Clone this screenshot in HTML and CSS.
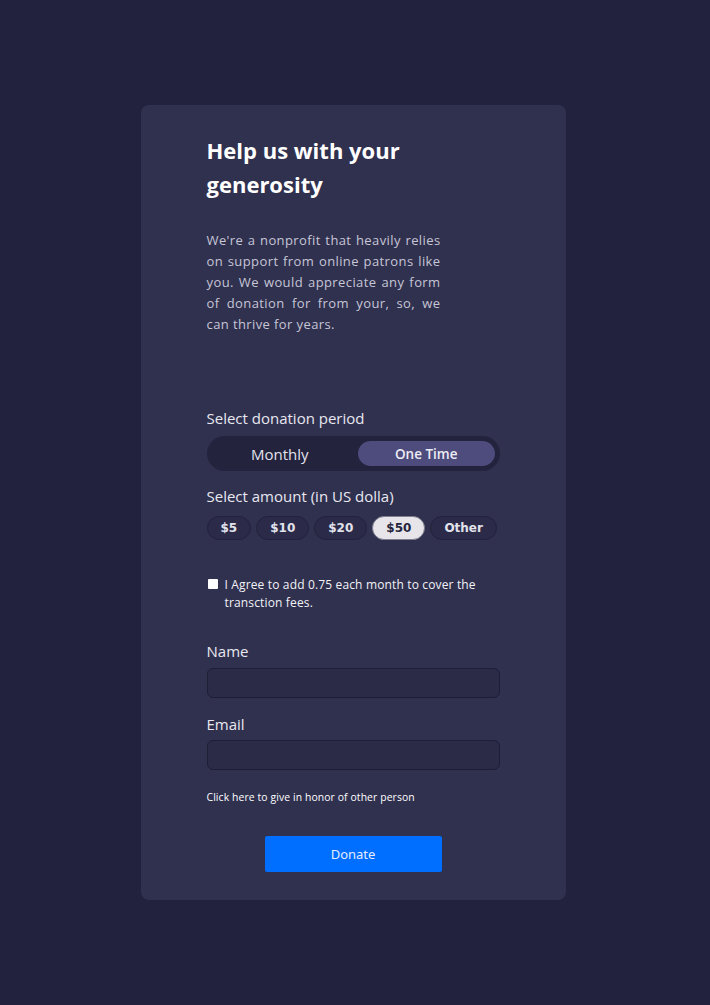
FILE: index.html
```html
<!DOCTYPE html>
<html lang="en">
<head>
<meta charset="utf-8">
<title>Donate</title>
<link rel="stylesheet" href="styles.css">
</head>
<body>
<div class="page">
  <form class="card">
    <h1 class="title">Help us with your generosity</h1>
    <p class="intro">We're a nonprofit that heavily relies on support from online patrons like you. We would appreciate any form of donation for from your, so, we can thrive for years.</p>

    <div class="label label-period">Select donation period</div>
    <div class="toggle">
      <span class="toggle-opt">Monthly</span>
      <span class="toggle-opt active">One Time</span>
    </div>

    <div class="label label-amount">Select amount (in US dolla)</div>
    <div class="amounts">
      <button type="button" class="amount">$5</button>
      <button type="button" class="amount">$10</button>
      <button type="button" class="amount">$20</button>
      <button type="button" class="amount selected">$50</button>
      <button type="button" class="amount">Other</button>
    </div>

    <label class="agree">
      <input type="checkbox" class="check">
      <span>I Agree to add 0.75 each month to cover the transction fees.</span>
    </label>

    <div class="label label-name">Name</div>
    <input type="text" class="field">
    <div class="label label-email">Email</div>
    <input type="email" class="field field-email">

    <a class="honor">Click here to give in honor of other person</a>

    <div class="actions">
      <button type="button" class="donate">Donate</button>
    </div>
  </form>
</div>
</body>
</html>
```
FILE: styles.css
```css
* { box-sizing: border-box; }
html, body { margin: 0; padding: 0; }
body {
  background: #22223e;
  min-height: 1005px;
  font-family: "Open Sans", "Noto Sans", sans-serif;
  color: #e6e6ee;
}
.page {
  display: flex;
  justify-content: center;
  padding: 105px 4px 0 0;
}
.card {
  width: 425px;
  height: 795px;
  background: #30304f;
  border-radius: 8px;
  padding: 28px 66px 28px 66px;
  display: flex;
  flex-direction: column;
}
.title {
  margin: 0;
  width: 234px;
  font-size: 22px;
  line-height: 34px;
  font-weight: 700;
  color: #ffffff;
}
.intro {
  margin: 29px 0 0 0;
  width: 234px;
  font-size: 13px;
  line-height: 21px;
  letter-spacing: 0.4px;
  text-align: justify;
  color: #c6c6d6;
}
.label {
  font-size: 15px;
  line-height: 22px;
  color: #e8e8f0;
}
.label-period { margin-top: 72px; }
.toggle {
  margin-top: 7px;
  width: 293px;
  height: 35px;
  background: #23233d;
  border-radius: 18px;
  padding: 5px;
  display: grid;
  grid-template-columns: 1fr 1fr;
  gap: 10px;
}
.toggle-opt {
  display: flex;
  align-items: center;
  justify-content: center;
  border-radius: 14px;
  font-size: 15px;
  color: #e2e2ec;
}
.toggle-opt.active {
  background: #4e4b7d;
  font-size: 13.5px;
  font-weight: 600;
  color: #ececf4;
}
.label-amount { margin-top: 14px; }
.amounts {
  margin-top: 9px;
  display: flex;
  gap: 5px;
}
.amount {
  height: 24px;
  padding: 0 13px;
  border: 1px solid #22223c;
  background: #2b2b49;
  border-radius: 12px;
  font-family: "DejaVu Sans", Verdana, sans-serif;
  font-weight: 700;
  font-size: 12px;
  color: #e2e2ec;
}
.amount.selected {
  background: #e7e5ea;
  border-color: #7f7e8e;
  color: #25253d;
}
.agree {
  margin-top: 36px;
  display: flex;
  gap: 7px;
  font-size: 12px;
  line-height: 18px;
  letter-spacing: 0.15px;
  color: #f2f2f6;
}
.check {
  appearance: none;
  -webkit-appearance: none;
  margin: 3px 0 0 1px;
  flex: none;
  width: 10px;
  height: 10px;
  border-radius: 1px;
  background: #ffffff;
}
.label-name { margin-top: 28px; }
.field {
  margin-top: 6px;
  width: 293px;
  height: 30px;
  border: 1px solid #1e1e36;
  border-radius: 6px;
  background: #2b2b48;
  color: #e6e6ee;
}
.label-email { margin-top: 15px; }
.field-email { margin-top: 5px; }
.honor {
  margin-top: 20px;
  font-size: 10.4px;
  line-height: 14px;
  letter-spacing: 0.1px;
  color: #ffffff;
}
.actions {
  margin-top: 32px;
  display: flex;
  justify-content: center;
}
.donate {
  width: 177px;
  height: 36px;
  border: none;
  border-radius: 2px;
  background: #006eff;
  font-family: "Noto Sans", sans-serif;
  font-size: 13px;
  color: #e4ecff;
}
```
